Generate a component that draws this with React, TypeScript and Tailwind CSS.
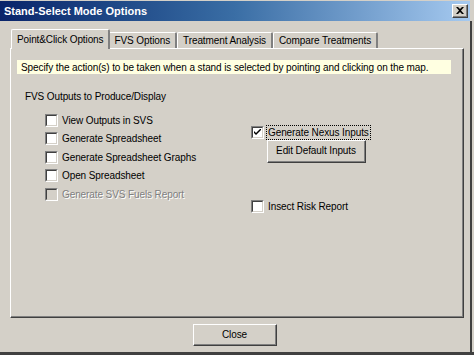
import React from 'react';

const font = { fontFamily: '"Liberation Sans", Arial, sans-serif' };

function CheckBox({ checked = false, disabled = false }: { checked?: boolean; disabled?: boolean }) {
  return (
    <div className="w-[13px] h-[13px] shrink-0 border-t border-l border-[#808080] border-r border-b border-r-white border-b-white">
      <div
        className={`w-full h-full border-t border-l border-[#404040] border-r border-b border-r-[#d4d0c8] border-b-[#d4d0c8] flex items-center justify-center ${
          disabled ? 'bg-[#d4d0c8]' : 'bg-white'
        }`}
      >
        {checked && (
          <svg width="7" height="7" viewBox="0 0 7 7">
            <path d="M0 2 L0 4 L2 6 L7 1 L7 -1 L2 4 Z" fill="#000" />
          </svg>
        )}
      </div>
    </div>
  );
}

function Option({ label, checked, disabled, focus }: { label: string; checked?: boolean; disabled?: boolean; focus?: boolean }) {
  return (
    <div className="flex items-center h-[18.5px]">
      <CheckBox checked={checked} disabled={disabled} />
      <span
        className={`ml-[3px] px-[1px] leading-[13px] ${focus ? 'outline outline-1 outline-dotted outline-[#000]' : ''} ${
          disabled ? 'text-[#808080] [text-shadow:1px_1px_0_#fff]' : 'text-black'
        }`}
      >
        {label}
      </span>
    </div>
  );
}

function Tab({ label, active }: { label: string; active?: boolean }) {
  return (
    <div
      className={`flex items-center border-t border-l border-white border-r-2 border-r-[#808080] rounded-tl-[2px] rounded-tr-[2px] ${
        active ? 'h-[20px] px-[5px] -mr-[2px] z-10 bg-[#d4d0c8] relative top-[1px]' : 'h-[16px] px-[5px] pb-[1px]'
      }`}
    >
      {label}
    </div>
  );
}

function Button({ label, className }: { label: React.ReactNode; className: string }) {
  return (
    <div className={`border-t border-l border-white border-r border-b border-r-[#404040] border-b-[#404040] ${className}`}>
      <div className="w-full h-full border-r border-b border-r-[#808080] border-b-[#808080] flex items-center justify-center">
        {label}
      </div>
    </div>
  );
}

export default function App() {
  return (
    <div
      className="w-[474px] h-[355px] bg-[#d4d0c8] flex flex-col text-[10px] tracking-[-0.1px] text-black overflow-hidden border-b-[3px] border-[#404040]"
      style={font}
    >
      {/* Title bar */}
      <div className="h-[20px] mt-[1px] mr-[4px] flex items-center justify-between bg-gradient-to-r from-[#0a246a] via-[#3a6ea5] to-[#a6caf0] pl-[4px] pr-[2px]">
        <span className="text-white font-bold text-[11px] tracking-normal">Stand-Select Mode Options</span>
        <Button
          label={
            <svg width="8" height="7" viewBox="0 0 8 7">
              <path d="M0 0 H2 L4 2 L6 0 H8 L5 3.5 L8 7 H6 L4 5 L2 7 H0 L3 3.5 Z" fill="#000" />
            </svg>
          }
          className="w-[16px] h-[14px] bg-[#d4d0c8]"
        />
      </div>

      <div className="flex-1 flex border-r-2 border-[#404040] mr-[2px]">
        <div className="flex-1 flex flex-col">
          {/* Tabs */}
          <div className="flex items-end pl-[11px] mt-[7px]">
            <Tab label="Point&Click Options" active />
            <Tab label="FVS Options" />
            <Tab label="Treatment Analysis" />
            <Tab label="Compare Treatments" />
          </div>

          {/* Panel */}
          <div className="ml-[10px] w-[454px] h-[270px] border-t border-l border-white border-r border-b border-r-[#404040] border-b-[#404040]">
            <div className="w-full h-full border-r border-b border-r-[#808080] border-b-[#808080] flex flex-col">
              <div className="mt-[11px] ml-[6px] w-[434px] h-[14px] bg-[#ffffe1] flex items-center pl-[4px] whitespace-nowrap">
                Specify the action(s) to be taken when a stand is selected by pointing and clicking on the map.
              </div>

              <div className="flex">
                <div className="ml-[14px] mt-[15px] w-[226px] flex flex-col">
                  <div className="h-[14px] flex items-center">FVS Outputs to Produce/Display</div>
                  <div className="ml-[20px] mt-[8px] flex flex-col">
                    <Option label="View Outputs in SVS" />
                    <Option label="Generate Spreadsheet" />
                    <Option label="Generate Spreadsheet Graphs" />
                    <Option label="Open Spreadsheet" />
                    <Option label="Generate SVS Fuels Report" disabled />
                  </div>
                </div>

                <div className="mt-[49px] flex flex-col">
                  <Option label="Generate Nexus Inputs" checked focus />
                  <Button label="Edit Default Inputs" className="ml-[16px] mt-[-2px] w-[99px] h-[23px]" />
                  <div className="mt-[35px]">
                    <Option label="Insect Risk Report" />
                  </div>
                </div>
              </div>
            </div>
          </div>

          {/* Footer */}
          <div className="mt-[6px] ml-[193px]">
            <Button label="Close" className="w-[84px] h-[22px]" />
          </div>
        </div>
      </div>
    </div>
  );
}
